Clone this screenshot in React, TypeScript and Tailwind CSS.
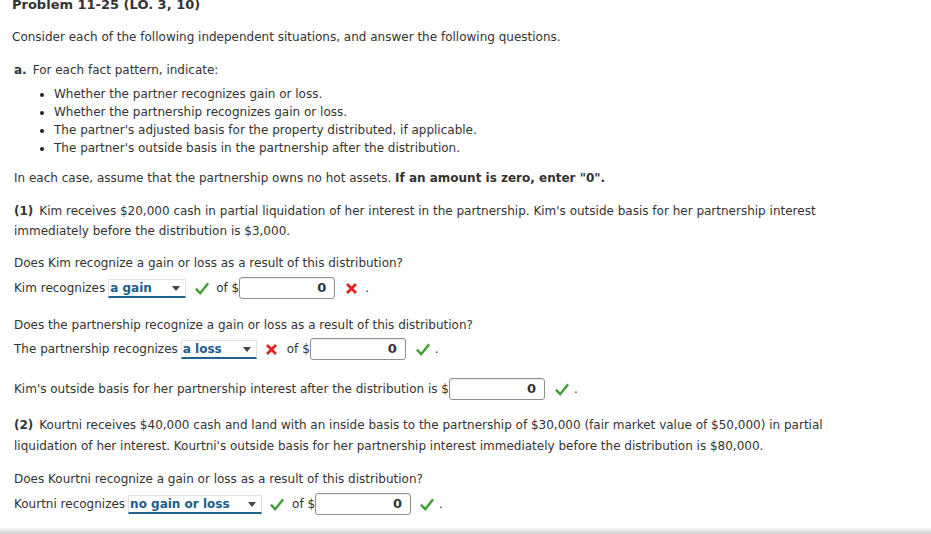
import React from "react";

const Check = () => (
	<svg width="14" height="14" viewBox="0 0 14 14" className="inline-block align-middle">
		<path d="M1.8 7.6 L5.2 11.2 L12.4 2.2" stroke="#43a036" strokeWidth="2.5" fill="none" strokeLinecap="square" />
	</svg>
);

const Cross = () => (
	<svg width="13" height="13" viewBox="0 0 13 13" className="inline-block align-middle">
		<path d="M2 2 L11 11 M11 2 L2 11" stroke="#e3211c" strokeWidth="2.7" fill="none" />
	</svg>
);

const Select = ({ value, width }: { value: string; width: string }) => (
	<span
		className={`relative inline-flex h-[19px] items-center border border-[#e2e2e2] border-b-2 border-b-[#23618f] bg-white pl-[1px] align-middle font-bold leading-none text-[#1d5d8c] ${width}`}
	>
		{value}
		<svg width="8" height="5" viewBox="0 0 8 5" className="absolute right-[5px] top-[6px]">
			<path d="M0 0 H8 L4 5 Z" fill="#444" />
		</svg>
	</span>
);

const Amount = () => (
	<span className="inline-flex h-[22px] w-[96px] items-center justify-end rounded-[3px] border border-[#8f8f8f] bg-white pr-[8px] align-middle text-[13px] font-bold text-[#333] shadow-[inset_0_1px_1px_rgba(0,0,0,0.08)]">
		0
	</span>
);

export default function App() {
	return (
		<div
			className="relative flex h-[534px] flex-col overflow-hidden bg-white text-[12px] text-[#333]"
			style={{ fontFamily: '"DejaVu Sans", Verdana, sans-serif' }}
		>
			<div className="pl-[12px]">
				<h2 className="mt-[-5px] text-[13px] font-bold leading-[20px] text-[#333]">
					Problem 11-25 (LO. 3, 10)
				</h2>

				<p className="mt-[12px] leading-[20px]">
					Consider each of the following independent situations, and answer the following questions.
				</p>

				<div className="pl-[2px]">
					<p className="mt-[13px] leading-[20px]">
						<span className="mr-[6px] font-bold">a.</span>For each fact pattern, indicate:
					</p>

					<ul className="mt-[5px] list-disc pl-[40px] leading-[18px] marker:text-[#222]">
						<li>Whether the partner recognizes gain or loss.</li>
						<li>Whether the partnership recognizes gain or loss.</li>
						<li>The partner's adjusted basis for the property distributed, if applicable.</li>
						<li>The partner's outside basis in the partnership after the distribution.</li>
					</ul>

					<p className="mt-[11px] leading-[20px]">
						In each case, assume that the partnership owns no hot assets.{" "}
						<span className="font-bold">If an amount is zero, enter "0".</span>
					</p>

					<p className="mt-[13px] leading-[20px]">
						<span className="mr-[6px] font-bold">(1)</span>Kim receives $20,000 cash in partial liquidation of her
						interest in the partnership. Kim's outside basis for her partnership interest
						<br />
						immediately before the distribution is $3,000.
					</p>

					<p className="mt-[12px] leading-[20px]">Does Kim recognize a gain or loss as a result of this distribution?</p>

					<div className="mt-[3px] flex h-[24px] items-center whitespace-nowrap">
						<span>Kim recognizes</span>
						<span className="ml-[3px]">
							<Select value="a gain" width="w-[78px]" />
						</span>
						<span className="ml-[9px]">
							<Check />
						</span>
						<span className="ml-[7px]">of $</span>
						<Amount />
						<span className="ml-[10px]">
							<Cross />
						</span>
						<span className="ml-[7px]">.</span>
					</div>

					<p className="mt-[15px] leading-[20px]">
						Does the partnership recognize a gain or loss as a result of this distribution?
					</p>

					<div className="mt-[2px] flex h-[24px] items-center whitespace-nowrap">
						<span>The partnership recognizes</span>
						<span className="ml-[3px]">
							<Select value="a loss" width="w-[76px]" />
						</span>
						<span className="ml-[8px]">
							<Cross />
						</span>
						<span className="ml-[9px]">of $</span>
						<Amount />
						<span className="ml-[10px]">
							<Check />
						</span>
						<span className="ml-[5px]">.</span>
					</div>

					<div className="mt-[16px] flex h-[24px] items-center whitespace-nowrap">
						<span>Kim's outside basis for her partnership interest after the distribution is $</span>
						<Amount />
						<span className="ml-[10px]">
							<Check />
						</span>
						<span className="ml-[5px]">.</span>
					</div>

					<p className="mt-[14px] leading-[21px]">
						<span className="mr-[6px] font-bold">(2)</span>Kourtni receives $40,000 cash and land with an inside basis
						to the partnership of $30,000 (fair market value of $50,000) in partial
						<br />
						liquidation of her interest. Kourtni's outside basis for her partnership interest immediately before the
						distribution is $80,000.
					</p>

					<p className="mt-[12px] leading-[20px]">Does Kourtni recognize a gain or loss as a result of this distribution?</p>

					<div className="mt-[3px] flex h-[24px] items-center whitespace-nowrap">
						<span>Kourtni recognizes</span>
						<span className="ml-[3px]">
							<Select value="no gain or loss" width="w-[134px]" />
						</span>
						<span className="ml-[8px]">
							<Check />
						</span>
						<span className="ml-[8px]">of $</span>
						<Amount />
						<span className="ml-[9px]">
							<Check />
						</span>
						<span className="ml-[5px]">.</span>
					</div>
				</div>
			</div>

			<div className="mt-auto h-[7px] bg-gradient-to-b from-transparent to-[#cfcfcf]" />
		</div>
	);
}
